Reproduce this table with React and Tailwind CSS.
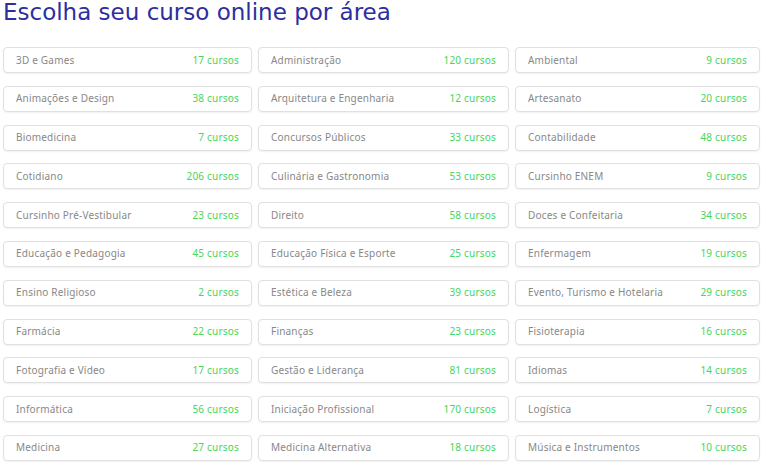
const areas = [
  ['3D e Games', 17], ['Administração', 120], ['Ambiental', 9],
  ['Animações e Design', 38], ['Arquitetura e Engenharia', 12], ['Artesanato', 20],
  ['Biomedicina', 7], ['Concursos Públicos', 33], ['Contabilidade', 48],
  ['Cotidiano', 206], ['Culinária e Gastronomia', 53], ['Cursinho ENEM', 9],
  ['Cursinho Pré-Vestibular', 23], ['Direito', 58], ['Doces e Confeitaria', 34],
  ['Educação e Pedagogia', 45], ['Educação Física e Esporte', 25], ['Enfermagem', 19],
  ['Ensino Religioso', 2], ['Estética e Beleza', 39], ['Evento, Turismo e Hotelaria', 29],
  ['Farmácia', 22], ['Finanças', 23], ['Fisioterapia', 16],
  ['Fotografia e Vídeo', 17], ['Gestão e Liderança', 81], ['Idiomas', 14],
  ['Informática', 56], ['Iniciação Profissional', 170], ['Logística', 7],
  ['Medicina', 27], ['Medicina Alternativa', 18], ['Música e Instrumentos', 10],
]

export default function App() {
  return (
    <div className="h-[463px] w-[768px] overflow-hidden bg-white font-['DejaVu_Sans',sans-serif]">
      <h1 className="pl-[3px] text-[23px] leading-[24px] text-[#2b2f9f]">Escolha seu curso online por área</h1>
      <div className="mt-[23px] grid grid-cols-[249px_251px_245px] gap-x-[6px] gap-y-[12.8px] pl-[3px] font-['Noto_Sans',sans-serif]">
        {areas.map(([name, n]) => (
          <div key={name} className="flex h-[26px] items-center justify-between rounded-[4px] border border-[#e0e0e0] pl-[12px] pr-[12px] shadow-[0_1px_2px_rgba(0,0,0,0.06)]">
            <span className="text-[10px] tracking-[0.2px] text-[#888]">{name}</span>
            <span className="text-[10px] tracking-[0.2px] text-[#45d65c]">{n} cursos</span>
          </div>
        ))}
      </div>
    </div>
  )
}
